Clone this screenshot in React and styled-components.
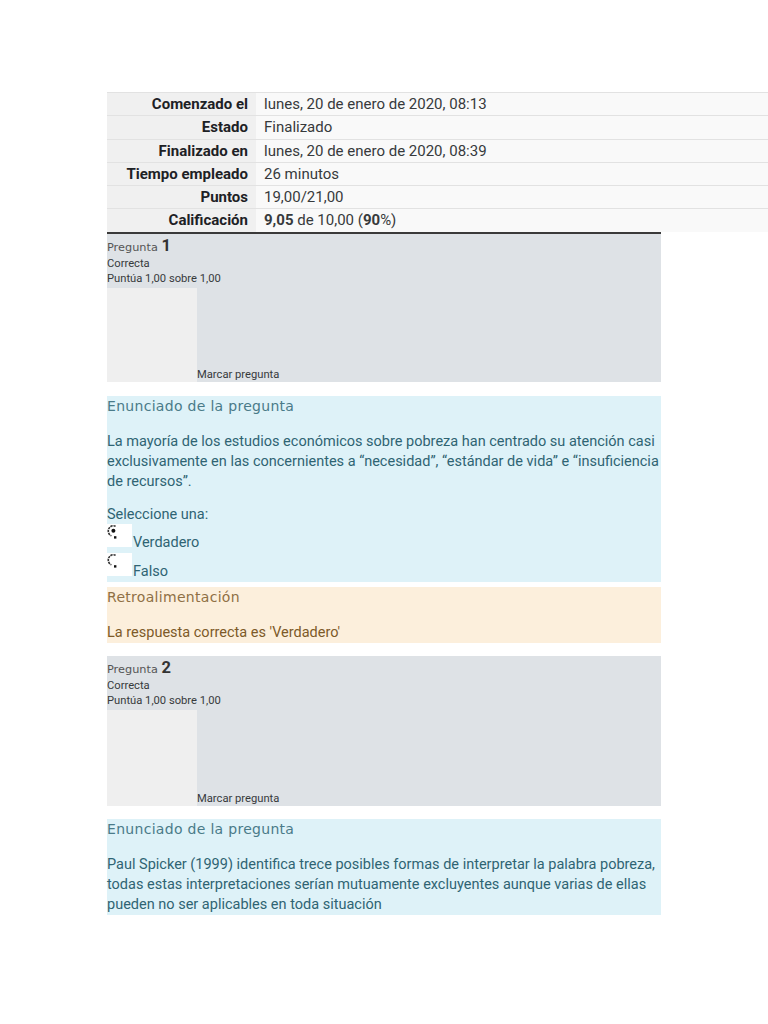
import styled, { createGlobalStyle } from "styled-components";

const GlobalStyle = createGlobalStyle`
  html, body {
    margin: 0;
    padding: 0;
    background: #ffffff;
  }
  body {
    font-family: Roboto, "Liberation Sans", sans-serif;
    color: #373a3c;
  }
`;

const Page = styled.main`
  padding: 92px 0 0 107px;
  min-height: 1024px;
  box-sizing: border-box;
`;

const Summary = styled.table`
  width: 100%;
  border-collapse: collapse;
  font-size: 15px;
  line-height: 18.3px;

  tr {
    border-top: 1px solid #e2e2e2;
  }

  th {
    width: 133px;
    padding: 2px 8px;
    text-align: right;
    font-weight: 700;
    color: #1d2125;
    background: #f0f0f0;
    white-space: nowrap;
  }

  td {
    padding: 2px 8px;
    text-align: left;
    color: #373a3c;
    background: #f9f9f9;
  }
`;

const Column = styled.div`
  width: 554px;
`;

const QuestionInfo = styled.section`
  background: #dee2e6;
  border-top: ${(p) => (p.$ruled ? "2px solid #3a3a3a" : "none")};
  margin-top: ${(p) => p.$gap || 0}px;
  padding-top: 3px;
  color: #373a3c;
`;

const QTitle = styled.h3`
  margin: 0;
  font-family: "DejaVu Sans", Verdana, sans-serif;
  font-size: 11.3px;
  font-weight: 400;
  line-height: 17px;
  color: #555;

  b {
    font-family: Roboto, sans-serif;
    font-size: 16.5px;
    font-weight: 700;
    color: #333;
  }
`;

const SmallLine = styled.div`
  font-size: 11.2px;
  line-height: 15px;
`;

const FlagRow = styled.div`
  display: flex;
  align-items: flex-end;
  margin-top: 2px;
`;

const FlagBox = styled.div`
  width: 90px;
  height: ${(p) => p.$h}px;
  background: #efefef;
`;

const FlagLabel = styled.span`
  font-size: 11.2px;
  line-height: 14px;
`;

const Formulation = styled.section`
  background: #def2f8;
  color: #2f6473;
  margin-top: ${(p) => p.$gap}px;
`;

const Feedback = styled.section`
  background: #fcefdc;
  color: #7d5a29;
  margin-top: 5px;
`;

const BoxHeading = styled.h4`
  margin: 0 0 17px;
  padding-top: 1px;
  font-family: "DejaVu Sans", Verdana, sans-serif;
  font-size: 14px;
  font-weight: 400;
  letter-spacing: 0.3px;
  line-height: 18px;
  color: ${(p) => p.$color};
`;

const BodyText = styled.p`
  margin: 0;
  font-size: 14.5px;
  line-height: 20px;
`;

const Prompt = styled.div`
  margin-top: 13px;
  font-size: 14.5px;
  line-height: 19px;
`;

const OptionRow = styled.label`
  display: flex;
  align-items: flex-end;
  height: 29px;
  font-size: 14.5px;
  line-height: 20px;
`;

const RadioBox = styled.span`
  display: block;
  width: 25px;
  height: 23px;
  background: #ffffff;
  align-self: flex-start;
  margin-right: 1px;

  svg {
    display: block;
  }
`;

function Radio({ checked }) {
  return (
    <RadioBox>
      <svg width="25" height="23" viewBox="0 0 25 23">
        <path
          d="M8.6 2.2 A5 5 0 1 0 4.4 11.8"
          fill="none"
          stroke="#333"
          strokeWidth="1.6"
          strokeDasharray="2.2 0.8"
        />
        <rect x="7" y="12.2" width="2.4" height="2.4" fill="#111" />
        {checked && <circle cx="6.4" cy="6.8" r="2" fill="#111" />}
      </svg>
    </RadioBox>
  );
}

function Info({ num, ruled, gap, boxH }) {
  return (
    <QuestionInfo $ruled={ruled} $gap={gap}>
      <QTitle>
        Pregunta <b>{num}</b>
      </QTitle>
      <SmallLine>Correcta</SmallLine>
      <SmallLine>Puntúa 1,00 sobre 1,00</SmallLine>
      <FlagRow>
        <FlagBox $h={boxH} />
        <FlagLabel>Marcar pregunta</FlagLabel>
      </FlagRow>
    </QuestionInfo>
  );
}

const rows = [
  ["Comenzado el", "lunes, 20 de enero de 2020, 08:13"],
  ["Estado", "Finalizado"],
  ["Finalizado en", "lunes, 20 de enero de 2020, 08:39"],
  ["Tiempo empleado", "26 minutos"],
  ["Puntos", "19,00/21,00"],
];

export default function App() {
  return (
    <>
      <GlobalStyle />
      <Page>
        <Summary>
          <tbody>
            {rows.map(([k, v]) => (
              <tr key={k}>
                <th>{k}</th>
                <td>{v}</td>
              </tr>
            ))}
            <tr>
              <th>Calificación</th>
              <td>
                <b>9,05</b> de 10,00 (<b>90</b>%)
              </td>
            </tr>
          </tbody>
        </Summary>

        <Column>
          <Info num="1" ruled boxH={94} />

          <Formulation $gap={14}>
            <BoxHeading $color="#4a7b89">Enunciado de la pregunta</BoxHeading>
            <BodyText>
              La mayoría de los estudios económicos sobre pobreza han centrado
              su atención casi exclusivamente en las concernientes a
              “necesidad”, “estándar de vida” e “insuficiencia de recursos”.
            </BodyText>
            <Prompt>Seleccione una:</Prompt>
            <OptionRow>
              <Radio checked />
              Verdadero
            </OptionRow>
            <OptionRow>
              <Radio />
              Falso
            </OptionRow>
          </Formulation>

          <Feedback>
            <BoxHeading $color="#8f7045">Retroalimentación</BoxHeading>
            <BodyText>La respuesta correcta es 'Verdadero'</BodyText>
          </Feedback>

          <Info num="2" gap={13} boxH={96} />

          <Formulation $gap={13}>
            <BoxHeading $color="#4a7b89">Enunciado de la pregunta</BoxHeading>
            <BodyText>
              Paul Spicker (1999) identifica trece posibles formas de
              interpretar la palabra pobreza, todas estas interpretaciones
              serían mutuamente excluyentes aunque varias de ellas pueden no
              ser aplicables en toda situación
            </BodyText>
          </Formulation>
        </Column>
      </Page>
    </>
  );
}
